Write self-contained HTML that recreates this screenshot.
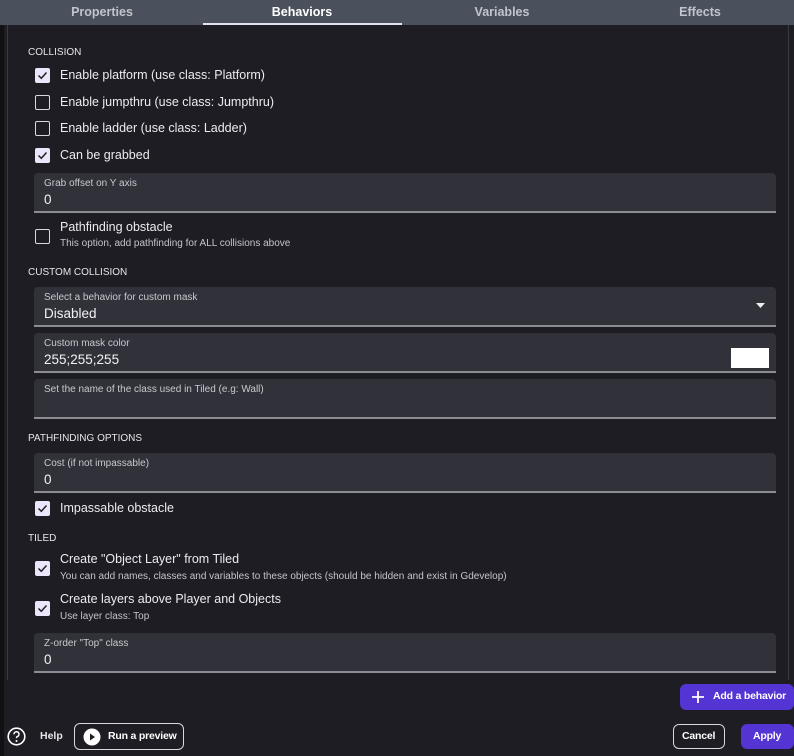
<!DOCTYPE html>
<html><head><style>
*{margin:0;padding:0;box-sizing:border-box}
body{width:794px;height:756px;background:#1d1d23;font-family:"Liberation Sans",sans-serif;color:#e6e6ea;position:relative;overflow:hidden}
.a{position:absolute;white-space:nowrap}
.tabs{left:0;top:0;width:794px;height:25px;background:#4a515c}
.tab{top:5px;font-size:12.5px;font-weight:bold;color:#c0c4cb;text-align:center;width:200px}
.sec{left:28px;font-size:10px;color:#e6e6ea}
.cb{left:35px;width:15px;height:15px;border:1.6px solid #d8d8de;border-radius:2px}
.cb.on{background:#ebe6fb;border-color:#ebe6fb}
.cb.on svg{position:absolute;left:1px;top:1px}
.lbl{left:60px;font-size:12.5px;color:#ececf0}
.sub{left:60px;font-size:10px;color:#c4c4ca}
.f{left:34px;width:742px;height:40px;background:#31313a;border-bottom:2px solid #8c8c94;border-radius:4px 4px 0 0}
.f .fl{position:absolute;left:10px;top:5px;font-size:10px;color:#c8c8ce}
.f .fv{position:absolute;left:10px;top:19px;font-size:13.5px;color:#f2f2f4}
.btn{border-radius:6px;font-size:10.5px;font-weight:bold;color:#fff;letter-spacing:-0.2px}
</style></head><body>
<div class="a" style="left:0;top:25px;width:4px;height:731px;background:#111114"></div>
<div class="a" style="left:7px;top:25px;width:1px;height:655px;background:#3a3a42"></div>
<div class="a" style="left:788px;top:25px;width:1px;height:655px;background:#3a3a42"></div>
<div class="a tabs"></div>
<div class="a tab" style="left:2px">Properties</div>
<div class="a tab" style="left:202px;color:#fff">Behaviors</div>
<div class="a tab" style="left:402px">Variables</div>
<div class="a tab" style="left:600px">Effects</div>
<div class="a" style="left:203px;top:23px;width:199px;height:2px;background:#e4e2f0"></div>

<div class="a sec" style="top:47px">COLLISION</div>
<div class="a cb on" style="top:68px"><svg width="11" height="11" viewBox="0 0 11 11"><path d="M1.5 5.5l2.8 2.8L9.5 2.5" stroke="#222" stroke-width="1.5" fill="none"/></svg></div>
<div class="a lbl" style="top:68px">Enable platform (use class: Platform)</div>
<div class="a cb" style="top:95px"></div>
<div class="a lbl" style="top:95px">Enable jumpthru (use class: Jumpthru)</div>
<div class="a cb" style="top:121px"></div>
<div class="a lbl" style="top:121px">Enable ladder (use class: Ladder)</div>
<div class="a cb on" style="top:148px"><svg width="11" height="11" viewBox="0 0 11 11"><path d="M1.5 5.5l2.8 2.8L9.5 2.5" stroke="#222" stroke-width="1.5" fill="none"/></svg></div>
<div class="a lbl" style="top:148px">Can be grabbed</div>
<div class="a f" style="top:173px"><div class="fl">Grab offset on Y axis</div><div class="fv">0</div></div>
<div class="a cb" style="top:229px"></div>
<div class="a lbl" style="top:220px">Pathfinding obstacle</div>
<div class="a sub" style="top:238px">This option, add pathfinding for ALL collisions above</div>

<div class="a sec" style="top:267px">CUSTOM COLLISION</div>
<div class="a f" style="top:287px"><div class="fl">Select a behavior for custom mask</div><div class="fv">Disabled</div>
<svg style="position:absolute;right:11px;top:16px" width="9" height="6"><path d="M0 0h9L4.5 5z" fill="#eee"/></svg></div>
<div class="a f" style="top:333px"><div class="fl">Custom mask color</div><div class="fv">255;255;255</div>
<div style="position:absolute;left:697px;top:15px;width:38px;height:20px;background:#fff"></div></div>
<div class="a f" style="top:379px"><div class="fl">Set the name of the class used in Tiled (e.g: Wall)</div></div>

<div class="a sec" style="top:433px">PATHFINDING OPTIONS</div>
<div class="a f" style="top:453px"><div class="fl">Cost (if not impassable)</div><div class="fv">0</div></div>
<div class="a cb on" style="top:501px"><svg width="11" height="11" viewBox="0 0 11 11"><path d="M1.5 5.5l2.8 2.8L9.5 2.5" stroke="#222" stroke-width="1.5" fill="none"/></svg></div>
<div class="a lbl" style="top:501px">Impassable obstacle</div>

<div class="a sec" style="top:533px">TILED</div>
<div class="a cb on" style="top:561px"><svg width="11" height="11" viewBox="0 0 11 11"><path d="M1.5 5.5l2.8 2.8L9.5 2.5" stroke="#222" stroke-width="1.5" fill="none"/></svg></div>
<div class="a lbl" style="top:552px">Create "Object Layer" from Tiled</div>
<div class="a sub" style="top:571px">You can add names, classes and variables to these objects (should be hidden and exist in Gdevelop)</div>
<div class="a cb on" style="top:601px"><svg width="11" height="11" viewBox="0 0 11 11"><path d="M1.5 5.5l2.8 2.8L9.5 2.5" stroke="#222" stroke-width="1.5" fill="none"/></svg></div>
<div class="a lbl" style="top:592px">Create layers above Player and Objects</div>
<div class="a sub" style="top:611px">Use layer class: Top</div>
<div class="a f" style="top:633px"><div class="fl">Z-order "Top" class</div><div class="fv">0</div></div>

<div class="a btn" style="left:680px;top:684px;width:114px;height:26px;background:#5534d4">
<svg style="position:absolute;left:11px;top:6px" width="14" height="14"><path d="M7 1v12M1 7h12" stroke="#fff" stroke-width="1.8"/></svg>
<span style="position:absolute;left:33px;top:6px">Add a behavior</span></div>

<svg class="a" style="left:7px;top:727px" width="19" height="19"><circle cx="9.5" cy="9.5" r="8.3" stroke="#fff" stroke-width="1.6" fill="none"/><path d="M7 7.3a2.5 2.5 0 1 1 3.2 2.3c-.6.3-.7.7-.7 1.5" stroke="#fff" stroke-width="1.5" fill="none"/><circle cx="9.5" cy="14" r="1" fill="#fff"/></svg>
<div class="a" style="left:40px;top:730px;font-size:10.5px;font-weight:bold">Help</div>
<div class="a btn" style="left:74px;top:723px;width:110px;height:27px;border:1px solid #d8d8de">
<svg style="position:absolute;left:8px;top:4px" width="18" height="18"><circle cx="9" cy="9" r="8.5" fill="#fff"/><path d="M7 5.5v7l5-3.5z" fill="#1d1d23"/></svg>
<span style="position:absolute;left:33px;top:6px">Run a preview</span></div>
<div class="a btn" style="left:673px;top:724px;width:52px;height:25px;border:1px solid #d8d8de"><span style="position:absolute;left:8px;top:5px">Cancel</span></div>
<div class="a btn" style="left:741px;top:724px;width:53px;height:25px;background:#5534d4"><span style="position:absolute;left:12px;top:6px">Apply</span></div>
</body></html>
